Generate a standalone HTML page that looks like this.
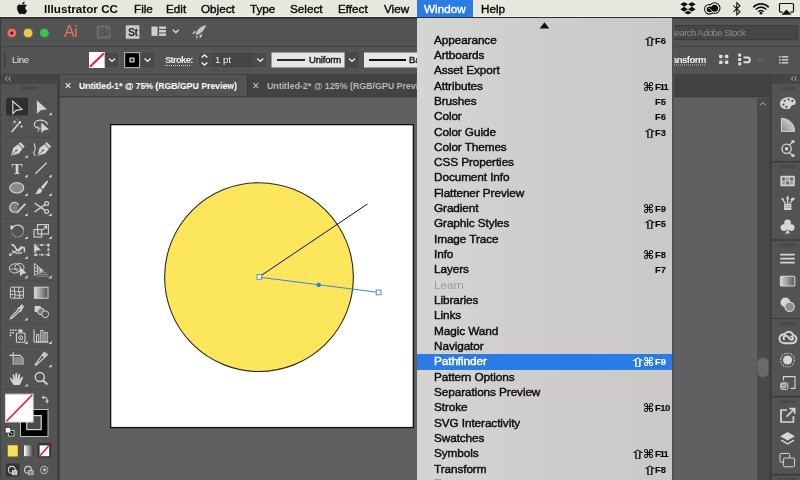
<!DOCTYPE html>
<html><head><meta charset="utf-8"><title>Illustrator CC</title>
<style>
*{box-sizing:border-box;margin:0;padding:0}
html,body{width:800px;height:480px;overflow:hidden;background:#323232;font-family:"Liberation Sans",sans-serif}
.abs{position:absolute}
#root{position:relative;width:800px;height:480px;overflow:hidden;background:#404040}
/* mac menubar */
#menubar{left:0;top:0;width:800px;height:18px;background:linear-gradient(#e7e8dd 0 16.4px,#f0f0e8 16.4px 17px,#6a6a66 17px 17.5px,#2c2c2c 17.5px)}
#menubar span{position:absolute;top:1px;font-size:11.7px;line-height:15px;color:#0a0a0a;white-space:nowrap;-webkit-text-stroke:0.4px #0a0a0a}
#menubar span.b{font-weight:bold;-webkit-text-stroke:0}
#winhl{left:417px;top:0;width:56px;height:17px;background:#2a7be4}
/* app window */
#appbar{left:0;top:18px;width:800px;height:28px;background:#535353;border-radius:3px 3px 0 0;border-top:1px solid #3a3a3a}
#ctrlbar{left:0;top:46px;width:800px;height:28px;background:#535353;border-top:1px solid #454545}
#tabbar{left:60px;top:75px;width:709px;height:22px;background:#424242}
#canvas{left:60px;top:97px;width:697px;height:383px;background:#606060}
#vscroll{left:757px;top:97px;width:12px;height:383px;background:#4a4a4a}
#tools{left:0;top:74px;width:57px;height:406px;background:#535353}
#toolshead{left:0;top:74px;width:57px;height:10px;background:#454545}
#dock{left:772px;top:74px;width:28px;height:406px;background:#383838}
#dockhead{left:772px;top:74px;width:28px;height:10px;background:#454545}
.grp{position:absolute;left:772px;width:28px;background:#535353}
.grip{position:absolute;left:8px;top:3px;width:15px;height:3px;background:repeating-linear-gradient(90deg,#3f3f3f 0 1px,#4b4b4b 1px 2px)}
/* menu */
#menu{left:417px;top:18px;width:255px;height:462px;background:linear-gradient(90deg,#d5d5d4 0,#cfcecc 45%,#cbc9c7 100%);box-shadow:1px 0 0 #4c4c4c,2px 0 0 #565656}
.mi{position:absolute;left:0;width:255px;height:15px;font-size:11.8px;letter-spacing:-0.1px;line-height:15px;color:#0c0c0c;white-space:nowrap;-webkit-text-stroke:0.42px #0c0c0c}
.mi .t{position:absolute;left:17px;top:0}
.mi .k{position:absolute;left:238.2px;top:0.9px;font-size:9.3px;font-weight:bold;letter-spacing:0;-webkit-text-stroke:0.15px currentColor}
.mi .s{position:absolute;top:0.8px;font-size:12px;line-height:15px;font-family:"DejaVu Sans",sans-serif;-webkit-text-stroke:0;display:inline-block;text-align:center;width:10px;letter-spacing:0}
.mi .s1{left:227.2px}.mi .s2{left:215.1px}
.mi .sh{font-size:12.4px;transform:scaleX(1.72);font-weight:normal;-webkit-text-stroke:0.2px currentColor}
.mi .cm{font-weight:bold;margin-left:-1.3px}
.mi.dis{color:#9c9b99;-webkit-text-stroke:0}
.mi.sel{color:#fff;-webkit-text-stroke:0.42px #fff}
.mi.sel:before{content:'';position:absolute;left:0;top:0;width:255px;height:16px;background:#2a7be4}
span,text{will-change:transform}
/*CHROMECSS*/
.cl{font-size:9.5px;line-height:13px;color:#e2e2e2;white-space:nowrap}
.tl{font-size:9.7px;line-height:13px;font-weight:bold;white-space:nowrap;letter-spacing:0;display:inline-block;transform-origin:0 50%;transform:scaleX(0.896)}
/*/CHROMECSS*/
</style></head><body>
<div id="root">
<!-- app chrome -->
<div id="appbar" class="abs"></div>
<div id="ctrlbar" class="abs"></div>
<div id="tabbar" class="abs"></div>
<div id="canvas" class="abs"></div>
<div id="vscroll" class="abs"></div>
<div id="tools" class="abs"></div>
<div id="toolshead" class="abs"></div>
<div id="dock" class="abs"></div>
<div id="dockhead" class="abs"></div>
<!-- ARTBOARD -->
<svg class="abs" style="left:60px;top:97px" width="709" height="383" viewBox="60 97 709 383">
 <rect x="110.65" y="124.65" width="302.7" height="302.9" fill="#fff" stroke="#111" stroke-width="1.3"/>
 <circle cx="259" cy="277.1" r="94.4" fill="#fce65c" stroke="#2a2a22" stroke-width="1.1"/>
 <path d="M259.6 276.6 L367.4 204" stroke="#111" stroke-width="1"/>
 <path d="M259.5 277.2 L378.6 292.4" stroke="#3d86d8" stroke-width="1"/>
 <circle cx="318.7" cy="284.9" r="2.2" fill="#2f7fd6"/>
 <rect x="257" y="274.7" width="4.6" height="4.6" fill="#fff" stroke="#3d86d8" stroke-width="0.9"/>
 <rect x="376.2" y="290" width="4.8" height="4.8" fill="#fff" stroke="#3d86d8" stroke-width="0.9"/>
 <path d="M759.8 105.4 L762.8 102.6 L765.8 105.4" fill="none" stroke="#b8b8b8" stroke-width="1"/>
 <rect x="757.4" y="357.5" width="11.2" height="19.5" rx="5.4" fill="#6a6a6a"/>
</svg>
<!-- /ARTBOARD -->
<!-- APPBAR-CONTENT -->
<svg class="abs" style="left:0;top:18px" width="420" height="28" viewBox="0 0 420 28">
 <circle cx="11.8" cy="15" r="4.8" fill="#ee6b5f" stroke="#45464e" stroke-width="0.6"/><circle cx="11.8" cy="15" r="1.5" fill="#4a100c"/>
 <circle cx="28.1" cy="15" r="4.8" fill="#ebc64c" stroke="#45464e" stroke-width="0.6"/>
 <circle cx="44.4" cy="15" r="4.8" fill="#3bc24c" stroke="#45464e" stroke-width="0.6"/>
 <rect x="96.5" y="7.3" width="14" height="13.5" fill="#686868"/>
 <rect x="125.8" y="7.3" width="13.6" height="13.5" fill="#c9c9c9"/>
 <g fill="#cfcfcf"><rect x="151.5" y="8.5" width="6" height="9.4"/><rect x="159" y="8.5" width="7" height="2.4"/><rect x="159" y="12" width="7" height="2.4"/><rect x="159" y="15.5" width="7" height="2.4"/></g>
 <path d="M172.8 11.8 L175.8 14.6 L178.8 11.8" fill="none" stroke="#e0e0e0" stroke-width="1.3"/>
 <g fill="#c4c4c4"><path d="M206 7 C201 8 196.5 12 195.5 16.5 C199 17.5 204.5 13 206 7Z"/><path d="M195.5 12.5 C193.6 13.5 192.4 15 192 16.6 C193.3 15.8 194.5 15.2 195.2 15Z"/><path d="M202.5 15.5 C202.3 17.6 201.4 19.4 199.8 20.6 C199.8 19.2 199.6 18.2 199.4 17.6Z"/><path d="M196.2 17.6 L198.2 18.6 C197.6 19.6 197 20.4 196 20.9 C196.3 19.8 196.3 18.6 196.2 17.6Z"/></g>
</svg>
<span class="abs" style="left:64.4px;top:23px;font-size:16px;line-height:18px;color:#e8745c;letter-spacing:-0.3px">Ai</span>
<span class="abs" style="left:98.6px;top:26.2px;font-size:10.6px;line-height:12px;color:#4e4e4e;font-weight:bold;letter-spacing:-0.7px">Br</span>
<span class="abs" style="left:128.2px;top:26.2px;font-size:10.6px;line-height:12px;color:#2c2c2c;font-weight:bold;letter-spacing:-0.6px">St</span>
<div class="abs" style="left:560px;top:25px;width:238px;height:15px;background:#464646;border:1px solid #3c3c3c;border-radius:2px"></div>
<span class="abs" style="left:668.5px;top:26px;font-size:9.5px;line-height:13px;color:#8b8b8b;white-space:nowrap;letter-spacing:-0.55px">Search Adobe Stock</span>
<!-- /APPBAR-CONTENT -->
<!-- CTRL-CONTENT -->
<div class="abs" style="left:4px;top:52px;width:2px;height:16px;background:repeating-linear-gradient(#404040 0 1px,#494949 1px 2px)"></div>
<div class="abs" style="left:0;top:19px;width:1px;height:461px;background:#3c3c3c"></div>
<span class="abs cl" style="left:12px;top:53px;letter-spacing:-0.35px">Line</span>
<svg class="abs" style="left:80px;top:46px" width="340" height="28" viewBox="80 46 340 28">
 <rect x="89" y="52" width="16" height="16" fill="#fff"/><path d="M90 66.8 L104 53.2" stroke="#ee1c24" stroke-width="1.9"/>
 <rect x="105" y="52" width="14" height="16" fill="#484848"/><path d="M109 58.6 L112 61.4 L115 58.6" fill="none" stroke="#efefef" stroke-width="1.4"/>
 <rect x="124.6" y="52.6" width="15" height="15" fill="#000" stroke="#a8a8a8" stroke-width="1.2"/>
 <rect x="129.4" y="57.4" width="5.2" height="5.2" rx="1" fill="#e6e6e6"/><rect x="130.6" y="58.6" width="2.8" height="2.8" rx="0.6" fill="#111"/><rect x="131.5" y="59.5" width="1" height="1" fill="#bbb"/>
 <rect x="140.5" y="52" width="14.5" height="16" fill="#484848"/><path d="M144.6 58.6 L147.6 61.4 L150.6 58.6" fill="none" stroke="#efefef" stroke-width="1.4"/>
 <path d="M165 65.5 H191" stroke="#cfcfcf" stroke-width="1" stroke-dasharray="1 1"/>
 <rect x="197.5" y="52" width="14" height="16" rx="2" fill="#4a4a4a"/>
 <path d="M201.6 57.6 L204.5 54.9 L207.4 57.6 M201.6 62.4 L204.5 65.1 L207.4 62.4" fill="none" stroke="#efefef" stroke-width="1.4"/>
 <rect x="212" y="52" width="41" height="16" fill="#454545"/>
 <rect x="253.5" y="52" width="13.5" height="16" fill="#4a4a4a"/><path d="M257.3 58.6 L260.3 61.4 L263.3 58.6" fill="none" stroke="#efefef" stroke-width="1.4"/>
 <rect x="197.6" y="52" width="69.6" height="16" rx="2" fill="none" stroke="#626262" stroke-width="0.8"/>
 <rect x="105" y="52" width="14.4" height="16" rx="1.5" fill="none" stroke="#5e5e5e" stroke-width="0.8"/>
 <rect x="140.6" y="52" width="14.6" height="16" rx="1.5" fill="none" stroke="#5e5e5e" stroke-width="0.8"/>
 <rect x="345" y="52" width="14.2" height="16" rx="1.5" fill="none" stroke="#5e5e5e" stroke-width="0.8"/>
 <rect x="271.5" y="52.5" width="73" height="15" fill="#e6e6e6"/><path d="M277 60 H305" stroke="#111" stroke-width="1.8"/>
 <rect x="345" y="52" width="14" height="16" fill="#484848"/><path d="M349 58.6 L352 61.4 L355 58.6" fill="none" stroke="#efefef" stroke-width="1.4"/>
 <rect x="364" y="52.5" width="60" height="15" fill="#e6e6e6"/><path d="M369 60 H406" stroke="#111" stroke-width="1.8"/>
</svg>
<span class="abs cl" style="left:165px;top:52.6px;color:#ececec;font-weight:bold;letter-spacing:-0.72px">Stroke:</span>
<span class="abs cl" style="left:215px;top:53px;color:#f0f0f0">1 pt</span>
<span class="abs cl" style="left:308.5px;top:53px;color:#161616;-webkit-text-stroke:0.4px #161616;letter-spacing:-0.17px">Uniform</span>
<span class="abs cl" style="left:409.4px;top:53px;color:#161616;-webkit-text-stroke:0.4px #161616;letter-spacing:-0.17px">Basic</span>
<span class="abs cl" style="left:664px;top:52.6px;color:#f2f2f2;font-weight:bold;letter-spacing:-0.5px">Transform</span>
<svg class="abs" style="left:672px;top:46px" width="128" height="28" viewBox="672 46 128 28">
 <g fill="#e2e2e2"><rect x="719.2" y="54.8" width="3.2" height="3.2"/><rect x="725.1" y="54.8" width="3.2" height="3.2"/><rect x="719.2" y="60.7" width="3.2" height="3.2"/><rect x="725.1" y="60.7" width="3.2" height="3.2"/></g>
 <g fill="#7c7c7c"><rect x="723" y="55.6" width="1.5" height="1.5"/><rect x="723" y="61.5" width="1.5" height="1.5"/><rect x="720" y="58.6" width="1.5" height="1.5"/><rect x="726" y="58.6" width="1.5" height="1.5"/><rect x="723" y="58.6" width="1.5" height="1.5"/></g>
 <path d="M672 64.9 H706" stroke="#a2a2a2" stroke-width="1.2" stroke-dasharray="1 1"/>
 <g fill="#e0e0e0"><rect x="738.2" y="53.6" width="3" height="3"/><rect x="738.2" y="58" width="3" height="3"/><rect x="738.2" y="62.4" width="3" height="3"/></g>
 <path d="M743.5 57.5 H747.5 A2.4 2.4 0 0 1 747.5 62.3 H743.5" fill="none" stroke="#e0e0e0" stroke-width="1.9"/>
 <path d="M757.4 58.4 L760.2 61 L763 58.4" fill="none" stroke="#6e6e6e" stroke-width="1.1"/>
 <g fill="#c6c6c6"><rect x="779" y="56" width="1.6" height="1.6"/><rect x="781.6" y="56" width="6.6" height="1.6"/><rect x="779" y="59" width="1.6" height="1.6"/><rect x="781.6" y="59" width="6.6" height="1.6"/><rect x="779" y="62" width="1.6" height="1.6"/><rect x="781.6" y="62" width="6.6" height="1.6"/></g>
</svg>
<!-- /CTRL-CONTENT -->
<!-- TAB-CONTENT -->
<div class="abs" style="left:60px;top:96px;width:709px;height:2px;background:linear-gradient(#3b3b3b 0 1.3px,#555 1.3px)"></div>
<div class="abs" style="left:60px;top:75px;width:187px;height:21px;background:#535353"></div>
<div class="abs" style="left:247px;top:75px;width:1px;height:21px;background:#383838"></div>
<svg class="abs" style="left:60px;top:75px" width="220" height="22" viewBox="60 75 220 22"><path d="M65.8 83.2 L70.4 87.8 M70.4 83.2 L65.8 87.8" stroke="#e8e8e8" stroke-width="1.2"/><path d="M253.6 83.2 L258.2 87.8 M258.2 83.2 L253.6 87.8" stroke="#bdbdbd" stroke-width="1.1"/></svg>
<span class="abs tl" style="left:79px;top:79px;color:#fafafa;-webkit-text-stroke:0.15px #fafafa">Untitled-1* @ 75% (RGB/GPU Preview)</span>
<span class="abs tl" style="left:267px;top:79px;color:#bcbcbc;transform:scaleX(0.914)">Untitled-2* @ 125% (RGB/GPU Preview)</span>
<!-- /TAB-CONTENT -->
<!-- TOOLS-CONTENT -->
<svg class="abs" style="left:0;top:74px" width="57" height="406" viewBox="0 74 57 406">
<rect x="0" y="84" width="1" height="396" fill="#444"/>
<path d="M20.5 88 H37" stroke="#3f3f3f" stroke-width="3" stroke-dasharray="1 1"/>
<path d="M7.4 76.5 L5.3 78.6 L7.4 80.7 M10.8 76.5 L8.7 78.6 L10.8 80.7" fill="none" stroke="#c4c4c4" stroke-width="0.9"/>
<path d="M5 137.3 H53" stroke="#4a4a4a" stroke-width="1"/>
<path d="M5 218.3 H53" stroke="#4a4a4a" stroke-width="1"/>
<path d="M5 281 H53" stroke="#4a4a4a" stroke-width="1"/>
<path d="M5 324 H53" stroke="#4a4a4a" stroke-width="1"/>
<path d="M5 346.8 H53" stroke="#4a4a4a" stroke-width="1"/>
<path d="M5 389.7 H53" stroke="#474747" stroke-width="1" stroke-dasharray="1 1"/>
<rect x="6" y="97.8" width="22" height="17.6" rx="2" fill="#2f2f2f"/>
<path d="M12.7 101.2 L12.9 113.6 L16.2 110.3 L22 109.3Z" fill="none" stroke="#d4d4d4" stroke-width="1.2" stroke-linejoin="miter"/>
<path d="M36.8 100.2 L37 113.8 L40.8 110.2 L46.8 109.2Z" fill="#d4d4d4"/>
<path d="M51.6 112.3 L51.6 115.2 L48.7 115.2Z" fill="#e2e2e2"/>
<path d="M11.6 132 L18.6 123.8" stroke="#d4d4d4" stroke-width="1.7"/><path d="M18.9 123.4 L20.6 121.5" stroke="#f2f2f2" stroke-width="1.9"/>
<g stroke="#d4d4d4" stroke-width="0.9"><path d="M14.6 120.4 v3 M13.1 121.9 h3"/><path d="M21.6 125.2 v2.6 M20.3 126.5 h2.6"/><path d="M16.8 119.4 l1 1"/><path d="M12.4 123.6 l0.8 .8"/></g>
<path d="M40.6 128.2 C36.5 128.6 34 126.4 34.4 123.9 C34.9 121 38.5 119.8 42 120.3 C45.6 120.8 47.6 122.7 47.3 124.6" fill="none" stroke="#d4d4d4" stroke-width="1.2"/>
<path d="M38.6 126.6 C37.2 126.4 37 128 38.2 128.6 C39.4 129.2 38.8 131.2 37.2 131.6" fill="none" stroke="#d4d4d4" stroke-width="1"/>
<path d="M41.2 122.6 L41.4 133 L44.3 130.2 L49 129.6Z" fill="#d4d4d4"/>
<g transform="translate(16.8 150.0) rotate(45) scale(0.88)"><path d="M-3.6 -5.6 L3.6 -5.6 L4.6 1.2 L0 9.4 L-4.6 1.2Z" fill="#d4d4d4"/><rect x="-3.6" y="-9.2" width="7.2" height="2.6" fill="#d4d4d4"/><path d="M0 8 L0 1.6" stroke="#535353" stroke-width="0.9"/><circle cx="0" cy="0.6" r="1.2" fill="#535353"/></g>
<path d="M27.6 154.9 L27.6 157.8 L24.700000000000003 157.8Z" fill="#e2e2e2"/>
<g transform="translate(43.2 150.0) rotate(45) scale(0.88)"><path d="M-3.6 -5.6 L3.6 -5.6 L4.6 1.2 L0 9.4 L-4.6 1.2Z" fill="#d4d4d4"/><rect x="-3.6" y="-9.2" width="7.2" height="2.6" fill="#d4d4d4"/><path d="M0 8 L0 1.6" stroke="#535353" stroke-width="0.9"/><circle cx="0" cy="0.6" r="1.2" fill="#535353"/></g>
<path d="M35 143.4 C32.4 145 37 147 35 149.8 C33.6 151.8 32.8 153.8 35.4 155.8" fill="none" stroke="#d4d4d4" stroke-width="1.1"/>
<text x="17" y="173.6" text-anchor="middle" font-family="Liberation Serif, serif" font-weight="bold" font-size="15.6" fill="#d4d4d4" transform="translate(17 0) scale(1.06 1) translate(-17 0)">T</text>
<path d="M27.6 174.29999999999998 L27.6 177.2 L24.700000000000003 177.2Z" fill="#e2e2e2"/>
<path d="M35.4 173.8 L46.6 162.8" stroke="#d4d4d4" stroke-width="1.3"/>
<path d="M51.6 174.29999999999998 L51.6 177.2 L48.7 177.2Z" fill="#e2e2e2"/>
<ellipse cx="16.8" cy="187.8" rx="7" ry="5.2" fill="#8b8b8b" stroke="#d4d4d4" stroke-width="1.1"/>
<path d="M27.6 193.1 L27.6 196 L24.700000000000003 196Z" fill="#e2e2e2"/>
<path d="M46.8 180.8 C47.6 180.4 48.4 181.2 48 182 L43 189.2 L40.8 187.2Z" fill="#d4d4d4"/><path d="M40 188 L42.2 190 C42 192.6 38.8 194.6 35 194 C37.4 192.8 36.8 189.2 40 188Z" fill="#d4d4d4"/>
<path d="M51.6 193.1 L51.6 196 L48.7 196Z" fill="#e2e2e2"/>
<path d="M18.6 204.6 A4.9 4.9 0 1 0 16.6 211.8" fill="#7d7d7d" stroke="#d4d4d4" stroke-width="1.2"/>
<path d="M24.6 203 L26.2 204.6 L18 213 L15.6 214 L16.4 211.4Z" fill="#d4d4d4" stroke="#535353" stroke-width="0.5"/>
<path d="M27.6 213.1 L27.6 216 L24.700000000000003 216Z" fill="#e2e2e2"/>
<g fill="none" stroke="#d4d4d4" stroke-width="1.2"><circle cx="46.6" cy="203.6" r="1.9"/><circle cx="46.6" cy="211.4" r="1.9"/></g><path d="M34.6 203 L45 210.4 M34.6 212 L45 204.6" stroke="#d4d4d4" stroke-width="1.4"/>
<path d="M51.6 213.1 L51.6 216 L48.7 216Z" fill="#e2e2e2"/>
<path d="M12.2 228.2 A6.2 6.2 0 0 1 23.6 229.6" fill="none" stroke="#d4d4d4" stroke-width="1.2"/>
<path d="M23.7 230.6 A6.2 6.2 0 0 1 11.6 232.6" fill="none" stroke="#d4d4d4" stroke-width="1.1" stroke-dasharray="1 1.2"/>
<path d="M10.2 225.4 L14.8 226 L11 230.4Z" fill="#d4d4d4"/>
<path d="M27.6 236.1 L27.6 239 L24.700000000000003 239Z" fill="#e2e2e2"/>
<g fill="none" stroke="#d4d4d4" stroke-width="1.1"><rect x="37.6" y="224.6" width="10.8" height="9.4"/><rect x="34" y="229.6" width="7.6" height="7.4"/><path d="M42.4 230.2 L46.4 226.4 M43.8 226.3 H46.5 V229"/></g>
<path d="M51.6 236.1 L51.6 239 L48.7 239Z" fill="#e2e2e2"/>
<path d="M11.4 244.6 C16.6 244.6 14.6 251 18.6 250.6 C21.2 250.2 20.8 247 23.2 247.4 C25 247.8 24.6 250.6 24.2 252.4" fill="none" stroke="#d4d4d4" stroke-width="1.6"/>
<path d="M9.4 255.4 L21.4 247" stroke="#d4d4d4" stroke-width="1"/><circle cx="10.2" cy="254.8" r="1.2" fill="#d4d4d4"/><circle cx="21" cy="247.4" r="1.2" fill="#d4d4d4"/><path d="M12 250.4 C14.6 253.4 18.4 253.6 22 252.6" fill="none" stroke="#d4d4d4" stroke-width="1.3"/>
<path d="M27.6 256.1 L27.6 259 L24.700000000000003 259Z" fill="#e2e2e2"/>
<rect x="35.6" y="245" width="12.8" height="9.8" fill="none" stroke="#d4d4d4" stroke-width="1" stroke-dasharray="1.2 1"/><g fill="#d4d4d4"><rect x="47.2" y="243.8" width="2.4" height="2.4"/><rect x="47.2" y="253.6" width="2.4" height="2.4"/><rect x="34.4" y="253.6" width="2.4" height="2.4"/><rect x="40.8" y="253.8" width="2" height="2"/><rect x="47.4" y="248.9" width="2" height="2"/><rect x="40.8" y="244" width="2" height="2"/><path d="M33.8 243 L34 253.6 L36.9 250.8 L41.4 250.2Z" stroke="#535353" stroke-width="0.5"/></g>
<g fill="none" stroke="#d4d4d4" stroke-width="1"><ellipse cx="15" cy="268.4" rx="5.6" ry="4.6"/><ellipse cx="19.4" cy="267.4" rx="4.6" ry="4"/></g><path d="M19.8 266.4 L20 276.4 L22.8 273.8 L26.6 273.2Z" fill="#d4d4d4"/><path d="M10.4 269 H19" stroke="#d4d4d4" stroke-width="0.8"/>
<path d="M27.6 275.3 L27.6 278.2 L24.700000000000003 278.2Z" fill="#e2e2e2"/>
<g fill="none" stroke="#d4d4d4" stroke-width="0.9"><path d="M34.4 263.4 V275.4 L43.4 270.8Z"/><path d="M37.4 265.4 V273.8 M40.4 268 V272.4 M34.4 267.4 L41.8 269.8 M34.4 271.4 L42.8 270.6"/></g><g stroke="#8e8e8e" stroke-width="0.9"><path d="M41 272.6 H47 M39 274.4 H48 M37 276.2 H49"/></g>
<path d="M51.6 275.3 L51.6 278.2 L48.7 278.2Z" fill="#e2e2e2"/>
<g fill="none" stroke="#d4d4d4" stroke-width="1"><rect x="10.4" y="287.2" width="13" height="11" rx="1"/><path d="M10.4 291.4 C14 289.6 18 293.6 23.4 291 M10.4 295 C14 293.2 18.4 297 23.4 294.6 M14.6 287.2 C13.4 291 16.4 294.6 14.4 298.2 M19 287.2 C17.8 291 21 294.4 19.2 298.2"/></g>
<defs><linearGradient id="gt" x1="0" x2="1"><stop offset="0" stop-color="#dcdcdc"/><stop offset="1" stop-color="#4e4e4e"/></linearGradient><linearGradient id="gt2" x1="0" x2="1"><stop offset="0" stop-color="#fff"/><stop offset="1" stop-color="#3a3a3a"/></linearGradient></defs>
<rect x="34.4" y="287.2" width="13.6" height="11" fill="url(#gt)" stroke="#d4d4d4" stroke-width="1"/>
<path d="M21.6 305 C22.8 305 23.6 306.4 23 307.6 L20.8 309.8 L21.4 310.4 L20.4 311.4 L19.8 310.8 L12.4 318 L10.4 318.8 L11.2 316.8 L18.4 309.4 L17.8 308.8 L18.8 307.8 L19.4 308.4Z" fill="none" stroke="#d4d4d4" stroke-width="1.1"/><path d="M21.4 305.6 L23 307.2 L20.6 309.6 L19 308Z" fill="#d4d4d4"/>
<path d="M27.6 317.5 L27.6 320.4 L24.700000000000003 320.4Z" fill="#e2e2e2"/>
<rect x="34.6" y="306" width="6" height="6" fill="#d4d4d4"/><circle cx="41" cy="311.4" r="3.4" fill="#7a7a7a" stroke="#d4d4d4" stroke-width="1"/><circle cx="45.2" cy="314.2" r="3.4" fill="#535353" stroke="#d4d4d4" stroke-width="1"/>
<g fill="#d4d4d4"><rect x="9.8" y="329.4" width="1.6" height="1.6"/><rect x="12.4" y="329.4" width="1.6" height="1.6"/><rect x="15" y="329.4" width="1.6" height="1.6"/><rect x="9.8" y="332" width="1.6" height="1.6"/><rect x="12.4" y="332" width="1.6" height="1.6"/><rect x="9.8" y="334.6" width="1.6" height="1.6"/></g><rect x="16.4" y="333" width="8.6" height="9.2" rx="1" fill="none" stroke="#d4d4d4" stroke-width="1.1"/><rect x="18.4" y="329.4" width="4" height="3" fill="#d4d4d4"/><circle cx="20.7" cy="337.8" r="2" fill="none" stroke="#d4d4d4" stroke-width="1"/><circle cx="20.7" cy="337.8" r="0.7" fill="#d4d4d4"/>
<path d="M27.6 341.1 L27.6 344 L24.700000000000003 344Z" fill="#e2e2e2"/>
<path d="M34 329.4 V342 H48.6" fill="none" stroke="#d4d4d4" stroke-width="1.1"/><g fill="none" stroke="#d4d4d4" stroke-width="1"><rect x="36.6" y="334.6" width="2.2" height="7.4"/><rect x="40.8" y="330.6" width="2.2" height="11.4"/><rect x="45" y="332.6" width="2.2" height="9.4"/></g>
<path d="M51.6 341.1 L51.6 344 L48.7 344Z" fill="#e2e2e2"/>
<path d="M13.2 352 V364 H23 V358.6 L20 355.4 H9.4" fill="none" stroke="#d4d4d4" stroke-width="1.1"/><path d="M14.4 357 H20 L22 359 V363 H14.4Z" fill="#8b8b8b"/>
<path d="M44.2 352.2 L47.6 354.6 L36 365.2 L35.2 364.6Z" fill="none" stroke="#d4d4d4" stroke-width="1.1"/><path d="M43.6 353 L47 355.2 L44.6 357.6 L41.8 355.4Z" fill="#d4d4d4"/>
<path d="M51.6 364.3 L51.6 367.2 L48.7 367.2Z" fill="#e2e2e2"/>
<path d="M13.6 385 C12.4 383 11 380.6 10.2 379.4 C9.6 378.4 10.8 377.6 11.6 378.4 L13.4 380.4 L12.6 375.2 C12.4 374 14 373.8 14.2 375 L15.2 379 L15.4 373.6 C15.4 372.4 17 372.4 17.1 373.6 L17.4 379 L18.6 374.4 C18.9 373.3 20.4 373.6 20.2 374.8 L19.6 380 L21.4 377.2 C22 376.2 23.4 376.9 22.9 378 C22 380 21 383 19.8 385Z" fill="#d4d4d4"/>
<path d="M27.6 383.70000000000005 L27.6 386.6 L24.700000000000003 386.6Z" fill="#e2e2e2"/>
<circle cx="39.8" cy="377" r="4.5" fill="none" stroke="#d4d4d4" stroke-width="1.4"/><path d="M43 380.4 L47.4 384.4" stroke="#d4d4d4" stroke-width="2"/>
<path d="M43 397.4 C46 396.6 47.6 398.6 47.2 401.4" fill="none" stroke="#d4d4d4" stroke-width="1.1"/><path d="M41.4 397.6 L44 395.6 L44.2 399.2Z M45.2 400.6 L49 400.8 L47 403.6Z" fill="#d4d4d4"/>
<rect x="20.5" y="409.5" width="27.5" height="27" fill="#000" stroke="#bdbdbd" stroke-width="1"/>
<rect x="26.8" y="415.6" width="14.4" height="14" fill="#4a4a4a" stroke="#d8d8d8" stroke-width="1.2"/>
<rect x="5.5" y="394.2" width="27.6" height="27.8" fill="#fff" stroke="#d9d9d9" stroke-width="1"/><path d="M6.4 421.2 L32.2 395" stroke="#f8121c" stroke-width="1.6"/>
<rect x="8.6" y="430.6" width="5.4" height="5.4" fill="#000" stroke="#e0e0e0" stroke-width="0.9"/><rect x="10.6" y="432.6" width="1.6" height="1.6" fill="#fff"/><rect x="5.2" y="427.4" width="5.6" height="5.6" fill="#fff" stroke="#333" stroke-width="0.8"/>
<rect x="37.6" y="443" width="13.6" height="14.6" rx="1" fill="#343434"/>
<rect x="8" y="445.4" width="9.6" height="10.8" fill="#f9e155" stroke="#e8d04a" stroke-width="0.6"/>
<rect x="24" y="445.4" width="9.6" height="10.8" fill="url(#gt2)"/>
<rect x="39.6" y="445.4" width="9.6" height="10.8" fill="#fff"/><path d="M40 455.8 L48.8 445.8" stroke="#f8121c" stroke-width="1.5"/>
<rect x="6" y="463.6" width="13.6" height="13" rx="1" fill="#343434"/>
<circle cx="11.8" cy="469.8" r="3.4" fill="none" stroke="#d6d6d6" stroke-width="1.1"/><rect x="12.4" y="470.6" width="4.6" height="4.2" fill="#bdbdbd" stroke="#e6e6e6" stroke-width="0.7"/>
<circle cx="28.0" cy="469.8" r="3.4" fill="none" stroke="#d6d6d6" stroke-width="1.1"/><rect x="28.6" y="470.6" width="4.6" height="4.2" fill="#8c8c8c" stroke="#cfcfcf" stroke-width="0.7"/>
<circle cx="44.2" cy="470.0" r="3.6" fill="none" stroke="#a8a8a8" stroke-width="1.1"/><circle cx="44.6" cy="469.79999999999995" r="1.6" fill="#bdbdbd"/>
</svg>
<!-- /TOOLS-CONTENT -->
<!-- DOCK-CONTENT -->
<svg class="abs" style="left:772px;top:74px" width="28" height="406" viewBox="772 74 28 406">
<path d="M793.4 76.5 L791.3 78.6 L793.4 80.7 M796.8 76.5 L794.7 78.6 L796.8 80.7" fill="none" stroke="#c4c4c4" stroke-width="0.9"/>
<rect x="772" y="84" width="28" height="77" fill="#535353"/>
<path d="M780 88.4 H795" stroke="#3f3f3f" stroke-width="3" stroke-dasharray="1 1"/>
<rect x="772" y="162.4" width="28" height="77.0" fill="#535353"/>
<path d="M780 166.8 H795" stroke="#3f3f3f" stroke-width="3" stroke-dasharray="1 1"/>
<rect x="772" y="240.6" width="28" height="77.4" fill="#535353"/>
<path d="M780 245.0 H795" stroke="#3f3f3f" stroke-width="3" stroke-dasharray="1 1"/>
<rect x="772" y="319" width="28" height="77" fill="#535353"/>
<path d="M780 323.4 H795" stroke="#3f3f3f" stroke-width="3" stroke-dasharray="1 1"/>
<rect x="772" y="397.4" width="28" height="76.60000000000002" fill="#535353"/>
<path d="M780 401.79999999999995 H795" stroke="#3f3f3f" stroke-width="3" stroke-dasharray="1 1"/>
<rect x="772" y="475.4" width="28" height="14.600000000000023" fill="#535353"/>
<path d="M780 479.79999999999995 H795" stroke="#3f3f3f" stroke-width="3" stroke-dasharray="1 1"/>
<path d="M780 104.4 C779.4 100 784 97 789 97.2 C793.6 97.4 796.4 100 795.6 103 C795 105.4 792.6 104.8 791.4 105.8 C790.2 106.8 791 108.6 788.4 109 C784.4 109.6 780.6 108 780 104.4Z" fill="#d6d6d6"/>
<circle cx="783.4" cy="104.6" r="1.15" fill="#535353"/>
<circle cx="784.6" cy="100.8" r="1.15" fill="#535353"/>
<circle cx="788.6" cy="99.6" r="1.15" fill="#535353"/>
<circle cx="792.4" cy="101" r="1.15" fill="#535353"/>
<circle cx="786.4" cy="107" r="1.15" fill="#535353"/>
<defs><linearGradient id="cg" x1="0" y1="1" x2="1" y2="0"><stop offset="0" stop-color="#8a8a8a"/><stop offset="1" stop-color="#e4e4e4"/></linearGradient><linearGradient id="gd" x1="0" x2="1"><stop offset="0" stop-color="#d8d8d8"/><stop offset="1" stop-color="#5a5a5a"/></linearGradient></defs>
<path d="M781.4 118.4 V131.4 H794.6 C794.6 124 789 118.4 781.4 118.4Z" fill="url(#cg)" stroke="#d6d6d6" stroke-width="1"/>
<circle cx="786.6" cy="148.8" r="4.6" fill="none" stroke="#d6d6d6" stroke-width="1.3"/><circle cx="786.6" cy="148.8" r="1.7" fill="#d6d6d6"/><path d="M789 145.4 L792.6 141.8 M789 152.2 L792.6 155.4" stroke="#d6d6d6" stroke-width="1.2"/><circle cx="793" cy="141.6" r="1.7" fill="#d6d6d6"/><circle cx="793" cy="155.6" r="1.7" fill="#d6d6d6"/>
<rect x="780.4" y="175.8" width="14.4" height="10.4" rx="1" fill="#d6d6d6"/>
<rect x="782" y="177.4" width="3.2" height="3.2" fill="#6c6c6c"/>
<rect x="786" y="177.4" width="3.2" height="3.2" fill="#9a9a9a"/>
<rect x="790" y="177.4" width="3.2" height="3.2" fill="#6c6c6c"/>
<rect x="782" y="181.4" width="3.2" height="3.2" fill="#9a9a9a"/>
<rect x="786" y="181.4" width="3.2" height="3.2" fill="#6c6c6c"/>
<rect x="790" y="181.4" width="3.2" height="3.2" fill="#9a9a9a"/>
<path d="M784 203.6 H791.4 V210 H784Z" fill="#d6d6d6"/><path d="M784.6 205.6 h6.2 M784.6 207.6 h6.2" stroke="#8a8a8a" stroke-width="0.7"/>
<path d="M787.6 203.4 V197.8" stroke="#d6d6d6" stroke-width="1.2"/><path d="M786.4 199.4 C786.2 197.6 787 196.2 787.8 195.4 C788.6 196.6 789 198 788.8 199.4Z" fill="#d6d6d6"/>
<path d="M785.6 203.4 L782.6 199.4" stroke="#d6d6d6" stroke-width="1.2"/><path d="M781.2 198 C781.4 199.6 782.4 200.4 783.6 200.6 L784 199 C783.2 198.2 782.2 197.8 781.2 198Z" fill="#d6d6d6"/>
<path d="M789.8 203.4 L792.4 199.8" stroke="#d6d6d6" stroke-width="1.2"/><path d="M790.4 199.6 C791.4 197.8 793.2 197.4 794.8 198.2 C794.6 199.6 793.4 200.8 792 200.8Z" fill="#d6d6d6"/>
<circle cx="787.6" cy="222.8" r="3.4" fill="#d6d6d6"/><circle cx="784" cy="227.6" r="3.4" fill="#d6d6d6"/><circle cx="791.2" cy="227.6" r="3.4" fill="#d6d6d6"/><path d="M787.6 226 C787.6 230 786.6 232.4 784.6 233.6 H790.6 C788.6 232.4 787.6 230 787.6 226Z" fill="#d6d6d6"/><rect x="786.4" y="225" width="2.4" height="4" fill="#d6d6d6"/>
<path d="M780.2 254.6 H794.8 M780.2 258.7 H794.8 M780.2 262.6 H794.8" stroke="#d6d6d6" stroke-width="1.7"/>
<rect x="780.4" y="276.2" width="14.4" height="9.8" rx="1" fill="url(#gd)" stroke="#d6d6d6" stroke-width="1.1"/>
<circle cx="785.4" cy="302.4" r="4.9" fill="#d6d6d6"/><circle cx="789.6" cy="306.8" r="4.7" fill="#8e8e8e" stroke="#d6d6d6" stroke-width="1.1"/>
<g fill="none" stroke="#d6d6d6" stroke-width="1.9"><path d="M784.6 343.2 C781 343.2 779.2 340.8 779.4 338.4 C779.6 335.6 782.2 333.8 784.6 334.4 C785.6 332 788.4 331.2 790.6 332.2 C792.2 332.9 793 334.2 793.2 335.2 C795.4 335.4 796.6 337.2 796.4 339.2 C796.2 341.6 794.2 343.2 792 343.2Z"/><path d="M784.6 340 C782.6 338.2 783.6 335.6 786 335.8 C787.4 336 788.4 337.4 789.4 338.6 C790.6 340 792.4 340.4 793 338.6 C793.4 337 791.6 336 790.4 337"/></g>
<circle cx="787.6" cy="360" r="4.6" fill="#d6d6d6"/><circle cx="787.6" cy="360" r="6.9" fill="none" stroke="#d6d6d6" stroke-width="1.1" stroke-dasharray="1.2 1.2"/>
<path d="M783.4 380.6 V376.6 H795 V388.4 H790.6" fill="none" stroke="#d6d6d6" stroke-width="1.1"/><rect x="780.8" y="383" width="7" height="6.4" rx="1" fill="none" stroke="#d6d6d6" stroke-width="1"/><circle cx="783.6" cy="385.4" r="2.6" fill="#9a9a9a" stroke="#d6d6d6" stroke-width="0.9"/>
<path d="M787 410 H781 V422 H793.4 V416" fill="none" stroke="#d6d6d6" stroke-width="1.7"/><path d="M786.6 416.6 L794.2 409 M789.4 408.6 H794.6 V413.8" fill="none" stroke="#d6d6d6" stroke-width="1.7"/>
<path d="M787.6 432 L795 436.2 L787.6 440.4 L780.2 436.2Z" fill="#d6d6d6"/><path d="M781.2 440.2 L787.6 443.8 L794 440.2" fill="none" stroke="#d6d6d6" stroke-width="1.5"/>
<rect x="780" y="453.4" width="9.6" height="8.8" rx="1" fill="none" stroke="#d6d6d6" stroke-width="1"/><rect x="783.6" y="458" width="11" height="8.8" rx="1" fill="#535353" stroke="#d6d6d6" stroke-width="1"/>
</svg>
<!-- /DOCK-CONTENT -->
<!-- MENU -->
<div id="menu" class="abs">
<svg class="abs" style="left:122px;top:4px" width="11" height="7"><path d="M5.5 0.3 L10.3 6.6 H0.7Z" fill="#111"/></svg>
<div class="mi" style="top:15.00px"><span class="t">Appearance</span><span class="s s1 sh">⇧</span><span class="k" style="letter-spacing:0px">F6</span></div>
<div class="mi" style="top:30.00px"><span class="t">Artboards</span></div>
<div class="mi" style="top:45.00px"><span class="t">Asset Export</span></div>
<div class="mi" style="top:61.00px"><span class="t">Attributes</span><span class="s s1 cm">⌘</span><span class="k" style="letter-spacing:-0.9px">F11</span></div>
<div class="mi" style="top:76.00px"><span class="t">Brushes</span><span class="k" style="letter-spacing:0px">F5</span></div>
<div class="mi" style="top:91.00px"><span class="t">Color</span><span class="k" style="letter-spacing:0px">F6</span></div>
<div class="mi" style="top:107.00px"><span class="t">Color Guide</span><span class="s s1 sh">⇧</span><span class="k" style="letter-spacing:0px">F3</span></div>
<div class="mi" style="top:122.00px"><span class="t">Color Themes</span></div>
<div class="mi" style="top:137.00px"><span class="t">CSS Properties</span></div>
<div class="mi" style="top:152.00px"><span class="t">Document Info</span></div>
<div class="mi" style="top:168.00px"><span class="t">Flattener Preview</span></div>
<div class="mi" style="top:183.00px"><span class="t">Gradient</span><span class="s s1 cm">⌘</span><span class="k" style="letter-spacing:0px">F9</span></div>
<div class="mi" style="top:198.00px"><span class="t">Graphic Styles</span><span class="s s1 sh">⇧</span><span class="k" style="letter-spacing:0px">F5</span></div>
<div class="mi" style="top:214.00px"><span class="t">Image Trace</span></div>
<div class="mi" style="top:229.00px"><span class="t">Info</span><span class="s s1 cm">⌘</span><span class="k" style="letter-spacing:0px">F8</span></div>
<div class="mi" style="top:244.00px"><span class="t">Layers</span><span class="k" style="letter-spacing:0px">F7</span></div>
<div class="mi dis" style="top:260.00px"><span class="t">Learn</span></div>
<div class="mi" style="top:275.00px"><span class="t">Libraries</span></div>
<div class="mi" style="top:290.00px"><span class="t">Links</span></div>
<div class="mi" style="top:306.00px"><span class="t">Magic Wand</span></div>
<div class="mi" style="top:321.00px"><span class="t">Navigator</span></div>
<div class="mi sel" style="top:336.00px"><span class="t">Pathfinder</span><span class="s s1 cm">⌘</span><span class="s s2 sh">⇧</span><span class="k" style="letter-spacing:0px">F9</span></div>
<div class="mi" style="top:352.00px"><span class="t">Pattern Options</span></div>
<div class="mi" style="top:367.00px"><span class="t">Separations Preview</span></div>
<div class="mi" style="top:382.00px"><span class="t">Stroke</span><span class="s s1 cm">⌘</span><span class="k" style="letter-spacing:-0.45px">F10</span></div>
<div class="mi" style="top:398.00px"><span class="t">SVG Interactivity</span></div>
<div class="mi" style="top:413.00px"><span class="t">Swatches</span></div>
<div class="mi" style="top:428.00px"><span class="t">Symbols</span><span class="s s1 cm">⌘</span><span class="s s2 sh">⇧</span><span class="k" style="letter-spacing:-0.9px">F11</span></div>
<div class="mi" style="top:444.00px"><span class="t">Transform</span><span class="s s1 sh">⇧</span><span class="k" style="letter-spacing:0px">F8</span></div>
<div class="mi" style="top:459.00px"><span class="t">Transparency</span><span class="s s1 cm">⌘</span><span class="s s2 sh">⇧</span><span class="k" style="letter-spacing:-0.45px">F10</span></div>
</div>
<!-- /MENU -->
<!-- MENUBAR -->
<div id="menubar" class="abs">
<div id="winhl" class="abs"></div>
<svg class="abs" style="left:0;top:0" width="800" height="18" viewBox="0 0 800 18">
<g transform="translate(17 1.6)" fill="#111"><path d="M5.1 3.5 C4.3 3.5 3.4 2.8 2.5 2.8 C1.0 2.8 0 4.1 0 6.0 C0 8.6 1.7 12.6 3.3 12.6 C4.0 12.6 4.4 12.1 5.3 12.1 C6.2 12.1 6.5 12.6 7.3 12.6 C8.6 12.6 9.7 10.4 10.2 9.2 C9.0 8.7 8.3 7.7 8.3 6.5 C8.3 5.4 8.9 4.5 9.8 3.9 C9.2 3.1 8.3 2.8 7.5 2.8 C6.5 2.8 5.9 3.5 5.1 3.5Z"/><path d="M7.6 0 C7.7 0.8 7.3 1.6 6.8 2.1 C6.3 2.6 5.6 3 5.0 2.9 C4.9 2.1 5.3 1.4 5.8 0.9 C6.3 0.4 7.0 0.05 7.6 0Z"/></g>
<path d="M680.3 4.35 L684.15 1.8999999999999995 L688.0 4.35 L684.15 6.8ZM688.0 4.35 L691.85 1.8999999999999995 L695.7 4.35 L691.85 6.8ZM680.3 9.3 L684.15 6.8500000000000005 L688.0 9.3 L684.15 11.75ZM688.0 9.3 L691.85 6.8500000000000005 L695.7 9.3 L691.85 11.75ZM684.4 12.7 L688 10.799999999999999 L691.6 12.7 L688 14.6Z" fill="#111"/>
<g><circle cx="709.4" cy="9.3" r="4.7" fill="none" stroke="#0c0c0c" stroke-width="1.3"/><circle cx="714.6" cy="8.1" r="5.3" fill="none" stroke="#0c0c0c" stroke-width="1.3"/><circle cx="709.4" cy="9.3" r="4.1" fill="#eeeee6"/><circle cx="714.6" cy="8.1" r="4.7" fill="#eeeee6"/><circle cx="709.6" cy="9.3" r="2.9" fill="#0c0c0c"/><circle cx="714.6" cy="8.2" r="3.5" fill="#0c0c0c"/><path d="M708.4 8 C710 8.4 711.4 10.2 712.6 11.8" fill="none" stroke="#eeeee6" stroke-width="0.9"/></g>
<path d="M733.4 5.6 L740 11.7 L736.8 14.7 V2.7 L740 5.7 L733.4 11.8" fill="none" stroke="#111" stroke-width="1.1" stroke-linejoin="miter"/>
<g fill="none" stroke="#111" stroke-width="1.7"><path d="M758.25 11.72 A3.7 3.7 0 0 1 763.75 11.72"/><path d="M755.80 9.52 A7.0 7.0 0 0 1 766.20 9.52"/><path d="M753.35 7.31 A10.3 10.3 0 0 1 768.65 7.31"/></g><circle cx="761" cy="13.2" r="1.35" fill="#111"/>
<path d="M782.6 12.2 H780.6 C779.9 12.2 779.5 11.8 779.5 11.1 V4.6 C779.5 3.9 779.9 3.5 780.6 3.5 H792.4 C793.1 3.5 793.5 3.9 793.5 4.6 V11.1 C793.5 11.8 793.1 12.2 792.4 12.2 H790.4" fill="none" stroke="#111" stroke-width="1.2"/><path d="M786.5 9.4 L791.6 14.8 H781.4Z" fill="#111"/>
</svg>
<span class="b" style="left:44px">Illustrator CC</span>
<span class="" style="left:134px">File</span>
<span class="" style="left:166px">Edit</span>
<span class="" style="left:201px">Object</span>
<span class="" style="left:250px">Type</span>
<span class="" style="left:290px">Select</span>
<span class="" style="left:338px">Effect</span>
<span class="" style="left:384px">View</span>
<span class="w" style="left:424px;color:#fff;-webkit-text-stroke:0.4px #fff">Window</span>
<span class="" style="left:481px">Help</span>
</div>
<!-- /MENUBAR -->
</div>
</body></html>
